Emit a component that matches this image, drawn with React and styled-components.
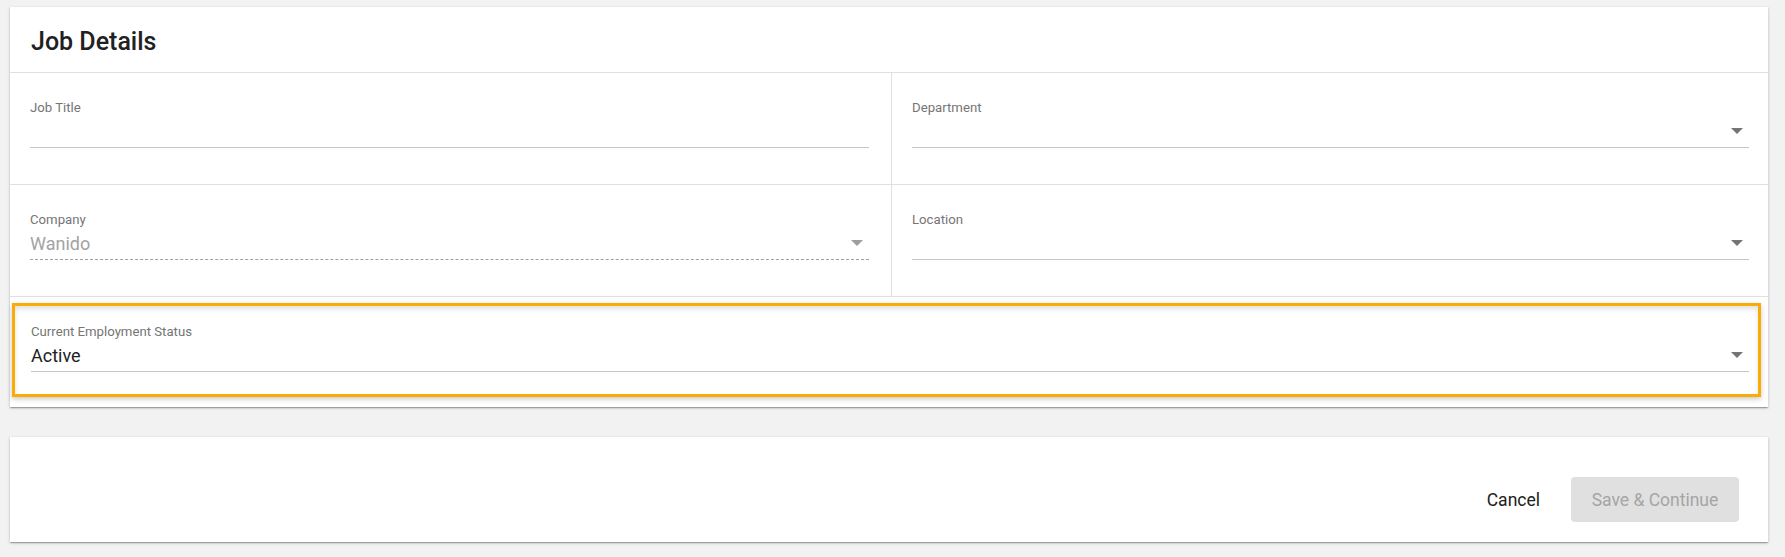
import React from "react";
import styled, { createGlobalStyle } from "styled-components";

const GlobalStyle = createGlobalStyle`
  html, body {
    margin: 0;
    padding: 0;
    background: #f1f2f1;
    font-family: Roboto, "Liberation Sans", Arial, sans-serif;
  }
  * { box-sizing: border-box; }
`;

const Page = styled.div`
  display: flex;
  flex-direction: column;
  gap: 30px;
  padding: 7px 17px 14px 10px;
`;

const Card = styled.section`
  background: #fff;
  box-shadow: 0 1px 3px rgba(0, 0, 0, 0.2), 0 1px 1px rgba(0, 0, 0, 0.14),
    0 2px 1px -1px rgba(0, 0, 0, 0.12);
`;

const CardHeader = styled.header`
  height: 66px;
  padding: 21px 21px 16px;
  border-bottom: 1px solid #e0e0e0;
`;

const Title = styled.h2`
  margin: 0;
  font-size: 25px;
  line-height: 28px;
  font-weight: 500;
  color: #212121;
`;

const Row = styled.div`
  display: grid;
  grid-template-columns: ${(p) => (p.$full ? "1fr" : "882px 1fr")};
  border-bottom: ${(p) => (p.$last ? "none" : "1px solid #e0e0e0")};
`;

const Cell = styled.div`
  padding: 27px ${(p) => (p.$divider ? "22px" : "19px")} 36px 20px;
  border-right: ${(p) => (p.$divider ? "1px solid #e0e0e0" : "none")};
`;

const HighlightCell = styled.div`
  padding: 6px 7px 10px 2px;
`;

const Highlight = styled.div`
  border: 3px solid #f8ad06;
  padding: 18px 9px 22px 16px;
  box-shadow: 0 2px 5px rgba(0, 0, 0, 0.22), inset 0 3px 5px rgba(0, 0, 0, 0.12);
`;

const Label = styled.label`
  display: block;
  font-size: 13.2px;
  line-height: 16px;
  color: #757575;
`;

const Input = styled.div`
  margin-top: 5px;
  height: 27px;
  padding: 0 6px 4px 0;
  display: flex;
  align-items: center;
  justify-content: space-between;
  border-bottom: 1px ${(p) => (p.$disabled ? "dashed #a0a0a0" : "solid #c6c6c6")};
`;

const Value = styled.span`
  font-size: 18px;
  line-height: 22px;
  color: ${(p) => (p.$disabled ? "#a3a3a3" : "#212121")};
`;

const Arrow = styled.svg`
  width: 12px;
  height: 6px;
  margin-bottom: 2px;
  flex: none;
  fill: ${(p) => (p.$disabled ? "#9e9e9e" : "#757575")};
`;

const Caret = ({ disabled }) => (
  <Arrow $disabled={disabled} viewBox="0 0 12 6">
    <path d="M0 0 L12 0 L6 6 Z" />
  </Arrow>
);

const Field = ({ label, value, select, disabled }) => (
  <>
    <Label>{label}</Label>
    <Input $disabled={disabled}>
      <Value $disabled={disabled}>{value}</Value>
      {select && <Caret disabled={disabled} />}
    </Input>
  </>
);

const Footer = styled(Card)`
  display: flex;
  justify-content: flex-end;
  align-items: center;
  gap: 31px;
  padding: 40px 29px 20px 0;
`;

const TextButton = styled.button`
  border: none;
  background: none;
  padding: 0;
  font-family: inherit;
  font-size: 17.5px;
  line-height: 20px;
  color: #212121;
  cursor: pointer;
`;

const FilledButton = styled.button`
  border: none;
  height: 45px;
  width: 168px;
  padding: 0;
  border-radius: 4px;
  background: #e0e0e0;
  color: #a5a5a5;
  font-family: inherit;
  font-size: 17.5px;
  line-height: 20px;
`;

export default function App() {
  return (
    <>
      <GlobalStyle />
      <Page>
        <Card>
          <CardHeader>
            <Title>Job Details</Title>
          </CardHeader>
          <Row>
            <Cell $divider>
              <Field label="Job Title" value="" />
            </Cell>
            <Cell>
              <Field label="Department" value="" select />
            </Cell>
          </Row>
          <Row>
            <Cell $divider>
              <Field label="Company" value="Wanido" select disabled />
            </Cell>
            <Cell>
              <Field label="Location" value="" select />
            </Cell>
          </Row>
          <Row $full $last>
            <HighlightCell>
              <Highlight>
                <Field label="Current Employment Status" value="Active" select />
              </Highlight>
            </HighlightCell>
          </Row>
        </Card>
        <Footer>
          <TextButton>Cancel</TextButton>
          <FilledButton disabled>Save &amp; Continue</FilledButton>
        </Footer>
      </Page>
    </>
  );
}
